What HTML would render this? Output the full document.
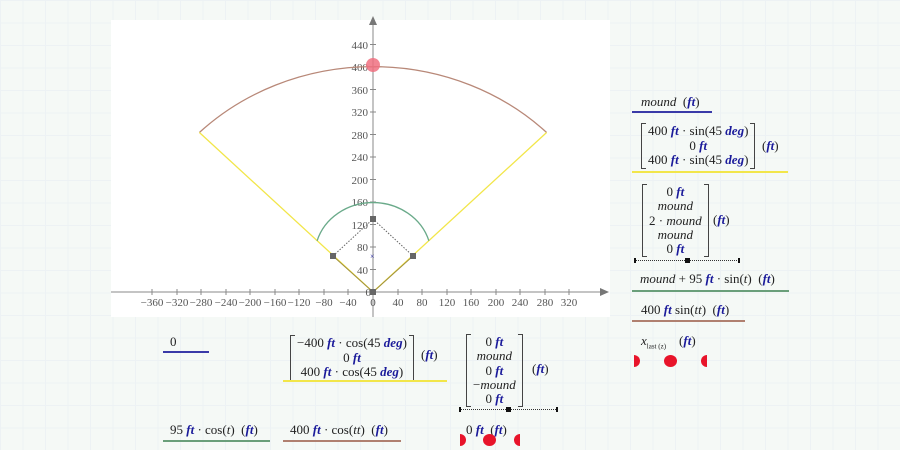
<!DOCTYPE html>
<html><head><meta charset="utf-8"><style>
body{margin:0;width:900px;height:450px;overflow:hidden;background:#f5f9f6;
background-image:linear-gradient(#edf2f4 1px,transparent 1px),linear-gradient(90deg,#edf2f4 1px,transparent 1px);background-size:22.5px 22.5px;
font-family:"Liberation Serif",serif;font-size:13px;color:#222;position:relative}
.a{position:absolute;white-space:nowrap}
.u{color:#1a1a9a;font-weight:bold;font-style:italic}
i{font-style:italic}
.ln{position:absolute;height:2px}
.m{position:absolute;border-left:1.5px solid #444;border-right:1.5px solid #444;text-align:center;line-height:14.5px;padding:1px 6px}
.m:before,.m:after{content:"";position:absolute;top:0;bottom:0;width:4px;border-top:1.5px solid #444;border-bottom:1.5px solid #444}
.m:before{left:0}.m:after{right:0}
.dot{position:absolute;height:0;border-top:1px dotted #333}
.cap{position:absolute;width:2px;height:5px;background:#111}
.sq{position:absolute;width:5px;height:5px;background:#111}
.rd{position:absolute;background:#e8142a;border-radius:50%}
</style></head><body>
<svg class="a" style="left:0;top:0" width="900" height="450">
<rect x="111" y="20" width="499" height="297" fill="#fff"/>
<g stroke="#888" stroke-width="1">
<line x1="111" y1="292" x2="604" y2="292"/><line x1="373" y1="20" x2="373" y2="317"/>
<path d="M370 44.5h6M370 67h6M370 89.5h6M370 112h6M370 134.5h6M370 157h6M370 179.5h6M370 202h6M370 224.5h6M370 247h6M370 269.5h6"/>
<path d="M152 289v6M177 289v6M201 289v6M226 289v6M250 289v6M275 289v6M299 289v6M324 289v6M348 289v6M398 289v6M422 289v6M447 289v6M471 289v6M496 289v6M520 289v6M545 289v6M569 289v6"/>
</g>
<polygon points="373,16 369,25 377,25" fill="#777"/>
<polygon points="609,292 600,288 600,296" fill="#777"/>
<g font-size="11" fill="#555" font-family="Liberation Serif,serif">
<g text-anchor="end">
<text x="368" y="49">440</text><text x="368" y="71">400</text>
<text x="368" y="94">360</text><text x="368" y="116">320</text>
<text x="368" y="139">280</text><text x="368" y="161">240</text>
<text x="368" y="184">200</text><text x="368" y="206">160</text>
<text x="368" y="229">120</text><text x="368" y="251">80</text>
<text x="368" y="274">40</text><text x="371" y="296">0</text>
</g>
<g text-anchor="middle">
<text x="152" y="306">−360</text><text x="177" y="306">−320</text>
<text x="201" y="306">−280</text><text x="226" y="306">−240</text>
<text x="250" y="306">−200</text><text x="275" y="306">−160</text>
<text x="299" y="306">−120</text><text x="324" y="306">−80</text>
<text x="348" y="306">−40</text><text x="373" y="306">0</text>
<text x="398" y="306">40</text><text x="422" y="306">80</text>
<text x="447" y="306">120</text><text x="471" y="306">160</text>
<text x="496" y="306">200</text><text x="520" y="306">240</text>
<text x="545" y="306">280</text><text x="569" y="306">320</text>
</g>
</g>
<path d="M199.4 132.5 A245.6 225 0 0 1 546.6 132.5" fill="none" stroke="#b88878" stroke-width="1.3"/>
<path d="M373 292 L199.4 132.5 M373 292 L546.6 132.5" stroke="#f2e64a" stroke-width="1.3" fill="none"/>
<path d="M373 292 L333 256 M373 292 L413 256" stroke="#a09040" stroke-width="1" fill="none"/>
<path d="M317.1 240.8 A58.3 53.4 0 0 1 428.9 240.8" fill="none" stroke="#6aaa8a" stroke-width="1.3"/>
<path d="M333 256 L373 219 L413 256" stroke="#666" stroke-dasharray="1.5 1.5" fill="none"/>
<rect x="330" y="253" width="6" height="6" fill="#666"/><rect x="410" y="253" width="6" height="6" fill="#666"/>
<rect x="370" y="216" width="6" height="6" fill="#666"/><rect x="370" y="289" width="6" height="6" fill="#666"/>
<text x="370" y="259" font-size="8" fill="#1a1a9a">×</text>
<circle cx="373" cy="65" r="7" fill="#f07080" opacity="0.85"/>
</svg>

<div class="a" style="left:641px;top:94px"><i>mound</i> &nbsp;(<span class="u">ft</span>)</div>
<div class="ln" style="left:632px;top:111px;width:80px;background:#3a3aa8"></div>
<div class="m" style="left:641px;top:123px">400 <span class="u">ft</span> · sin(45 <span class="u">deg</span>)<br>0 <span class="u">ft</span><br>400 <span class="u">ft</span> · sin(45 <span class="u">deg</span>)</div>
<div class="a" style="left:762px;top:138px">(<span class="u">ft</span>)</div>
<div class="ln" style="left:632px;top:171px;width:156px;background:#f2e64a"></div>
<div class="m" style="left:642px;top:184px;line-height:14.3px">0 <span class="u">ft</span><br><i>mound</i><br>2 · <i>mound</i><br><i>mound</i><br>0 <span class="u">ft</span></div>
<div class="a" style="left:713px;top:212px">(<span class="u">ft</span>)</div>
<div class="dot" style="left:634px;top:260px;width:105px"></div>
<div class="cap" style="left:634px;top:258px"></div><div class="cap" style="left:738px;top:258px"></div>
<div class="sq" style="left:685px;top:258px"></div>
<div class="a" style="left:640px;top:271px"><i>mound</i> + 95 <span class="u">ft</span> · sin(<i>t</i>) &nbsp;(<span class="u">ft</span>)</div>
<div class="ln" style="left:632px;top:290px;width:157px;background:#6a9f7a"></div>
<div class="a" style="left:641px;top:302px">400 <span class="u">ft</span> sin(<i>tt</i>) &nbsp;(<span class="u">ft</span>)</div>
<div class="ln" style="left:632px;top:320px;width:113px;background:#b08070"></div>
<div class="a" style="left:641px;top:333px"><i>x</i><sub style="font-size:7px">last (z)</sub> &nbsp;&nbsp;&nbsp;(<span class="u">ft</span>)</div>
<div class="rd" style="left:628px;top:355px;width:12px;height:12px;clip-path:inset(0 0 0 50%)"></div>
<div class="rd" style="left:664px;top:355px;width:13px;height:12px"></div>
<div class="rd" style="left:701px;top:355px;width:12px;height:12px;clip-path:inset(0 50% 0 0)"></div>

<div class="a" style="left:170px;top:334px">0</div>
<div class="ln" style="left:163px;top:351px;width:46px;background:#3a3aa8"></div>
<div class="m" style="left:290px;top:335px">−400 <span class="u">ft</span> · cos(45 <span class="u">deg</span>)<br>0 <span class="u">ft</span><br>400 <span class="u">ft</span> · cos(45 <span class="u">deg</span>)</div>
<div class="a" style="left:421px;top:347px">(<span class="u">ft</span>)</div>
<div class="ln" style="left:283px;top:380px;width:164px;background:#f2e64a"></div>
<div class="m" style="left:466px;top:334px;line-height:14.3px">0 <span class="u">ft</span><br><i>mound</i><br>0 <span class="u">ft</span><br>−<i>mound</i><br>0 <span class="u">ft</span></div>
<div class="a" style="left:532px;top:361px">(<span class="u">ft</span>)</div>
<div class="dot" style="left:460px;top:409px;width:98px"></div>
<div class="cap" style="left:459px;top:407px"></div><div class="cap" style="left:556px;top:407px"></div>
<div class="sq" style="left:506px;top:407px"></div>
<div class="a" style="left:170px;top:422px">95 <span class="u">ft</span> · cos(<i>t</i>) &nbsp;(<span class="u">ft</span>)</div>
<div class="ln" style="left:163px;top:440px;width:107px;background:#6a9f7a"></div>
<div class="a" style="left:290px;top:422px">400 <span class="u">ft</span> · cos(<i>tt</i>) &nbsp;(<span class="u">ft</span>)</div>
<div class="ln" style="left:283px;top:440px;width:118px;background:#b08070"></div>
<div class="a" style="left:466px;top:422px">0 <span class="u">ft</span> &nbsp;(<span class="u">ft</span>)</div>
<div class="rd" style="left:454px;top:434px;width:12px;height:12px;clip-path:inset(0 0 0 50%)"></div>
<div class="rd" style="left:483px;top:434px;width:13px;height:12px"></div>
<div class="rd" style="left:514px;top:434px;width:12px;height:12px;clip-path:inset(0 50% 0 0)"></div>
</body></html>
